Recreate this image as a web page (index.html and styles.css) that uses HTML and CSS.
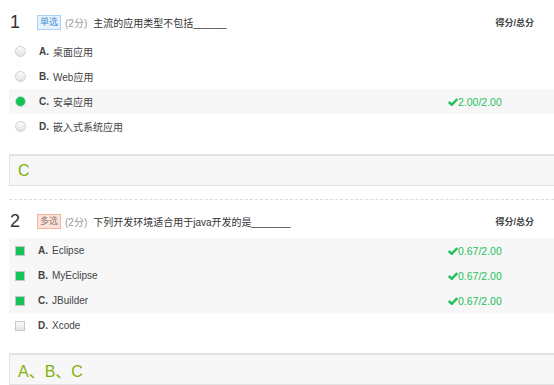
FILE: index.html
```html
<!doctype html>
<html>
<head>
<meta charset="utf-8">
<title>作业结果</title>
<link rel="stylesheet" href="styles.css">
</head>
<body>
<div class="paper">

	<!-- question 1 -->
	<div class="question">
		<div class="q-head">
			<span class="q-num">1</span>
			<span class="tag single">单选</span>
			<span class="points">(2分)</span>
			<span class="q-title">主流的应用类型不包括______</span>
			<span class="total">得分/总分</span>
		</div>
		<ul class="options">
			<li class="opt"><span class="radio"></span><b>A.</b><span class="opt-text">桌面应用</span></li>
			<li class="opt"><span class="radio"></span><b>B.</b><span class="opt-text">Web应用</span></li>
			<li class="opt picked"><span class="radio on"></span><b>C.</b><span class="opt-text">安卓应用</span>
				<span class="score"><svg class="tick" viewBox="0 0 10 8"><path d="M0.8 4 L3.8 6.8 L9.3 1" /></svg>2.00/2.00</span></li>
			<li class="opt"><span class="radio"></span><b>D.</b><span class="opt-text">嵌入式系统应用</span></li>
		</ul>
		<div class="answer">C</div>
	</div>

	<!-- question 2 -->
	<div class="question next">
		<div class="q-head">
			<span class="q-num">2</span>
			<span class="tag multi">多选</span>
			<span class="points">(2分)</span>
			<span class="q-title">下列开发环境适合用于java开发的是_______</span>
			<span class="total">得分/总分</span>
		</div>
		<ul class="options">
			<li class="opt picked"><span class="check on"></span><b>A.</b><span class="opt-text">Eclipse</span>
				<span class="score"><svg class="tick" viewBox="0 0 10 8"><path d="M0.8 4 L3.8 6.8 L9.3 1" /></svg>0.67/2.00</span></li>
			<li class="opt picked"><span class="check on"></span><b>B.</b><span class="opt-text">MyEclipse</span>
				<span class="score"><svg class="tick" viewBox="0 0 10 8"><path d="M0.8 4 L3.8 6.8 L9.3 1" /></svg>0.67/2.00</span></li>
			<li class="opt picked"><span class="check on"></span><b>C.</b><span class="opt-text">JBuilder</span>
				<span class="score"><svg class="tick" viewBox="0 0 10 8"><path d="M0.8 4 L3.8 6.8 L9.3 1" /></svg>0.67/2.00</span></li>
			<li class="opt"><span class="check"></span><b>D.</b><span class="opt-text">Xcode</span></li>
		</ul>
		<div class="answer">A、B、C</div>
	</div>

</div>
</body>
</html>
```

FILE: styles.css
```css
html, body {
	margin: 0;
	padding: 0;
	background: #fff;
	overflow: hidden;
}

body {
	font-family: "Liberation Sans", "Noto Sans CJK SC", sans-serif;
	color: #333;
}

.paper {
	padding-left: 9px;
}

.question.next {
	border-top: 1px dashed #dcdcdc;
}

.q-head {
	display: flex;
	align-items: center;
	height: 39px;
	padding-top: 5px;
	box-sizing: border-box;
}

.question.next .q-head {
	height: 38px;
}

.q-num {
	width: 27px;
	padding-left: 1px;
	font-size: 18px;
	color: #333;
}

.tag {
	font-size: 9px;
	line-height: 13px;
	padding: 0 2px;
	border: 1px solid;
	margin-right: 4px;
}

.tag.single {
	background: #e6f3ff;
	border-color: #a8d3f7;
	color: #4a8ed0;
}

.tag.multi {
	background: #fde2d9;
	border-color: #f5b49e;
	color: #8f7a74;
}

.points {
	font-size: 10px;
	color: #999;
	margin-right: 6px;
}

.q-title {
	flex: 1;
	font-size: 10px;
	color: #333;
}

.total {
	font-size: 9px;
	font-weight: bold;
	color: #444;
	margin-right: 20px;
}

.options {
	list-style: none;
	margin: 0;
	padding: 0;
}

.opt {
	display: flex;
	align-items: center;
	height: 25px;
	font-size: 10px;
}

.opt.picked {
	background: #f7f7f7;
}

.opt b {
	font-weight: bold;
	color: #444;
	margin-left: 13px;
	width: 14px;
}

.opt-text {
	flex: 1;
	color: #444;
}

.radio {
	width: 9px;
	height: 9px;
	margin-left: 6px;
	border: 1px solid #cfcfcf;
	border-radius: 50%;
	background: linear-gradient(#fdfdfd, #e2e2e2);
}

.radio.on {
	background: #12c35a;
	border-color: #d8d8d8;
}

.check {
	width: 8px;
	height: 8px;
	margin-left: 6px;
	border: 1px solid #cacaca;
	background: linear-gradient(#fafafa, #e4e4e4);
}

.check.on {
	background: #16c25c;
	border-color: #c4c4c4;
}

.score {
	width: 106px;
	display: flex;
	align-items: center;
	font-size: 10.5px;
	color: #1fbf5c;
}

.tick {
	width: 10px;
	height: 8px;
	margin-right: 0;
}

.tick path {
	fill: none;
	stroke: #1fbf5c;
	stroke-width: 2.4;
}

.answer {
	margin: 15px -6px 13px 0;
	height: 32px;
	box-sizing: border-box;
	border: 1px solid #e2e2e2;
	border-top-width: 2px;
	background: #f7f7f7;
	padding-left: 8px;
	display: flex;
	align-items: center;
	font-size: 16px;
	color: #7fb20a;
}
```
